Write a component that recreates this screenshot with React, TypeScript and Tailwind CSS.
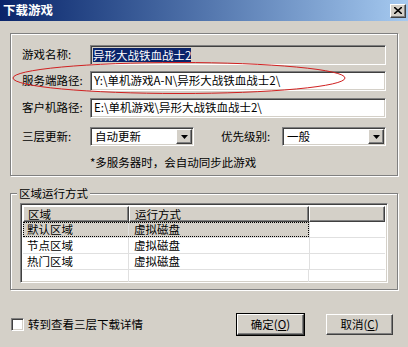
import React from "react";

const sunken =
  "border-[1px] border-t-[#808080] border-l-[#808080] border-b-white border-r-white shadow-[inset_1px_1px_0_#404040,inset_-1px_-1px_0_#d4d0c8]";
const raised =
  "border-[1px] border-t-white border-l-white border-b-[#404040] border-r-[#404040] shadow-[inset_-1px_-1px_0_#808080]";

function Select({ value, width }: { value: string; width: string }) {
  return (
    <div className={`${sunken} ${width} h-[19px] bg-white flex items-stretch p-[1px]`}>
      <span className="flex-1 pl-[3px] leading-[15px]">{value}</span>
      <span className={`${raised} w-[16px] bg-[#d4d0c8] flex items-center justify-center`}>
        <svg width="7" height="4" viewBox="0 0 7 4">
          <path d="M0 0h7L3.5 4z" fill="#000" />
        </svg>
      </span>
    </div>
  );
}

const rows = [
  ["默认区域", "虚拟磁盘"],
  ["节点区域", "虚拟磁盘"],
  ["热门区域", "虚拟磁盘"],
];

export default function App() {
  return (
    <div
      className="relative w-[408px] h-[347px] overflow-hidden bg-[#d4d0c8] text-[11.5px] text-black"
      style={{ fontFamily: '"Noto Sans CJK SC", "Liberation Sans", sans-serif' }}
    >
      <div className="h-[21px] flex items-center justify-between pl-[3px] pr-[2px] bg-gradient-to-r from-[#0a246a] to-[#a6caf0]">
        <span className="text-white font-bold text-[12.5px] leading-none">下载游戏</span>
        <span className={`${raised} w-[16px] h-[14px] bg-[#d4d0c8] flex items-center justify-center`}>
          <svg width="8" height="7" viewBox="0 0 8 7">
            <path d="M0 0l8 7M8 0L0 7" stroke="#000" strokeWidth="1.6" />
          </svg>
        </span>
      </div>

      <div className="px-[10px] pt-[12px]">
        <div className="border border-[#808080] shadow-[inset_1px_1px_0_#fff,1px_1px_0_#fff] h-[143px] pl-[11px] pr-[11px] pt-[11px]">
          <div className="flex items-center h-[20px]">
            <span className="w-[68px]">游戏名称:</span>
            <div className={`${sunken} flex-1 h-[20px] bg-[#d4d0c8] px-[2px] flex items-center`}>
              <span className="bg-[#0a246a] text-white leading-[14px]">异形大战铁血战士2</span>
            </div>
          </div>
          <div className="flex items-center h-[20px] mt-[6px]">
            <span className="w-[68px]">服务端路径:</span>
            <div className={`${sunken} flex-1 h-[20px] bg-white px-[3px] flex items-center`}>
              Y:\单机游戏A-N\异形大战铁血战士2\
            </div>
          </div>
          <div className="flex items-center h-[20px] mt-[7px]">
            <span className="w-[68px]">客户机路径:</span>
            <div className={`${sunken} flex-1 h-[20px] bg-white px-[3px] flex items-center`}>
              E:\单机游戏\异形大战铁血战士2\
            </div>
          </div>
          <div className="flex items-center h-[19px] mt-[9px]">
            <span className="w-[68px]">三层更新:</span>
            <Select value="自动更新" width="w-[104px]" />
            <span className="ml-[27px] w-[61px]">优先级别:</span>
            <Select value="一般" width="w-[104px]" />
          </div>
          <div className="mt-[8px] pl-[68px]">*多服务器时，会自动同步此游戏</div>
        </div>

        <div className="relative mt-[17px] border border-[#808080] shadow-[inset_1px_1px_0_#fff,1px_1px_0_#fff] h-[97px] px-[9px] pt-[9px]">
          <span className="absolute left-[6px] top-[-9px] bg-[#d4d0c8] px-[2px] leading-[16px]">区域运行方式</span>
          <div className={`${sunken} h-[80px] bg-white p-[2px] overflow-hidden`}>
            <div className="flex h-[16px] bg-[#d4d0c8] leading-[14px]">
              <div className={`${raised} w-[106px] pl-[4px] overflow-hidden`}>区域</div>
              <div className={`${raised} w-[180px] pl-[5px] overflow-hidden`}>运行方式</div>
              <div className={`${raised} flex-1`}></div>
            </div>
            {rows.map(([zone, mode], i) => (
              <div key={zone} className="flex h-[16px] leading-[15px] border-b border-[#e0e0e0]">
                <div
                  className={`flex w-[286px] ${i === 0 ? "bg-[#d4d0c8] outline-1 outline-dotted outline-black -outline-offset-1" : ""}`}
                >
                  <div className="w-[106px] h-[15px] pl-[4px] border-r border-[#e0e0e0] overflow-hidden">{zone}</div>
                  <div className="w-[180px] h-[15px] pl-[5px] overflow-hidden">{mode}</div>
                </div>
                <div className="flex-1 border-l border-[#e0e0e0]"></div>
              </div>
            ))}
            <div className="flex h-[14px]">
              <div className="w-[106px] border-r border-[#e0e0e0]"></div>
              <div className="w-[180px] border-r border-[#e0e0e0]"></div>
              <div className="flex-1"></div>
            </div>
          </div>
        </div>

        <div className="flex items-center mt-[24px] pl-[1px] h-[21px]">
          <span className={`${sunken} w-[13px] h-[13px] bg-white`}></span>
          <span className="ml-[4px]">转到查看三层下载详情</span>
          <button className={`${raised} ml-auto w-[67px] h-[21px] bg-[#d4d0c8] outline outline-1 outline-black`}>
            确定(<u>O</u>)
          </button>
          <button className={`${raised} ml-[22px] mr-[5px] w-[67px] h-[21px] bg-[#d4d0c8]`}>
            取消(<u>C</u>)
          </button>
        </div>
      </div>

      <svg className="absolute left-[10px] top-[60px]" width="338" height="36" viewBox="0 0 338 36">
        <ellipse cx="169" cy="18" rx="166" ry="15.5" fill="none" stroke="#d02020" strokeWidth="1" />
      </svg>
    </div>
  );
}
